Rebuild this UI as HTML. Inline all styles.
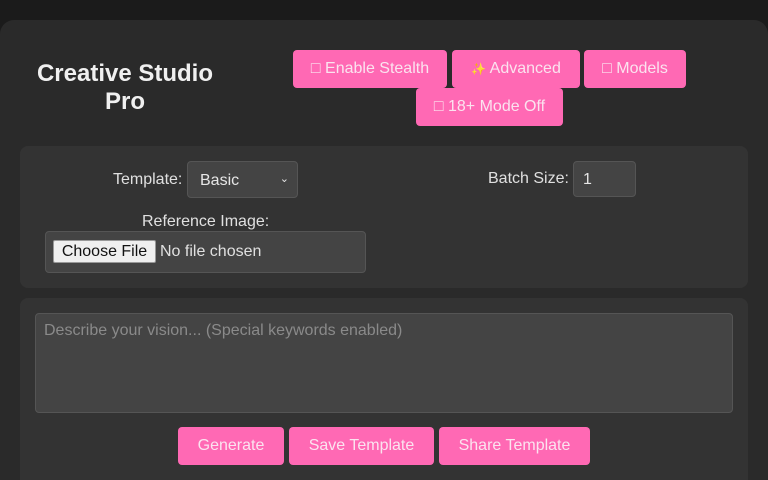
<!DOCTYPE html>
<html><head><style>
*{box-sizing:border-box;margin:0;padding:0}
html,body{width:768px;height:480px;overflow:hidden}
body{background:#1b1b1b;font-family:"Liberation Sans",sans-serif;position:relative;color:#e0e0e0}
.c{position:absolute;left:0;top:20px;width:768px;height:460px;background:#2a2a2a;border-radius:14px 14px 0 0}
.a{position:absolute}
.btn{position:absolute;background:#ff69b4;color:#fbe3ef;border-radius:4px;font-size:16px;text-align:center;height:38px;line-height:38px;white-space:nowrap}
.p{position:absolute;background:#333;border-radius:8px}
.lbl{position:absolute;font-size:16px;color:#e0e0e0;white-space:nowrap}
.in{position:absolute;background:#444;border:1px solid #555;border-radius:4px;color:#e6e6e6;font-size:16px}
</style></head><body>
<div class="c"></div>
<div class="a" style="left:30px;top:60px;width:190px;text-align:center;font-weight:bold;font-size:24px;line-height:28px;color:#f0f0f0">Creative Studio Pro</div>
<div class="btn" style="left:293px;top:50px;width:154px">&#9633; Enable Stealth</div>
<div class="btn" style="left:452px;top:50px;width:128px"><span style="font-size:12px">✨</span> Advanced</div>
<div class="btn" style="left:584px;top:50px;width:102px">&#9633; Models</div>
<div class="btn" style="left:416px;top:88px;width:147px">&#9633; 18+ Mode Off</div>

<div class="p" style="left:20px;top:146px;width:728px;height:142px"></div>
<div class="lbl" style="left:113px;top:171px">Template:</div>
<div class="in" style="left:187px;top:161px;width:111px;height:37px;padding:10px 0 0 12px">Basic<span style="position:absolute;right:8px;top:10px;font-size:11px">&#8964;</span></div>
<div class="lbl" style="left:488px;top:170px">Batch Size:</div>
<div class="in" style="left:573px;top:161px;width:63px;height:36px;padding:9px 0 0 9px">1</div>
<div class="lbl" style="left:142px;top:213px">Reference Image:</div>
<div class="in" style="left:45px;top:231px;width:321px;height:42px"></div>
<div class="a" style="left:53px;top:240px;width:103px;height:23px;background:#efefef;border:1px solid #999;border-radius:2px;color:#111;font-size:16px;line-height:21px;text-align:center">Choose File</div>
<div class="lbl" style="left:160px;top:243px">No file chosen</div>

<div class="p" style="left:20px;top:298px;width:728px;height:190px"></div>
<div class="in" style="left:35px;top:313px;width:698px;height:100px;padding:8px 8px;color:#8a8a8a">Describe your vision... (Special keywords enabled)</div>
<div class="btn" style="left:178px;top:427px;width:106px">Generate</div>
<div class="btn" style="left:289px;top:427px;width:145px">Save Template</div>
<div class="btn" style="left:439px;top:427px;width:151px">Share Template</div>
</body></html>
